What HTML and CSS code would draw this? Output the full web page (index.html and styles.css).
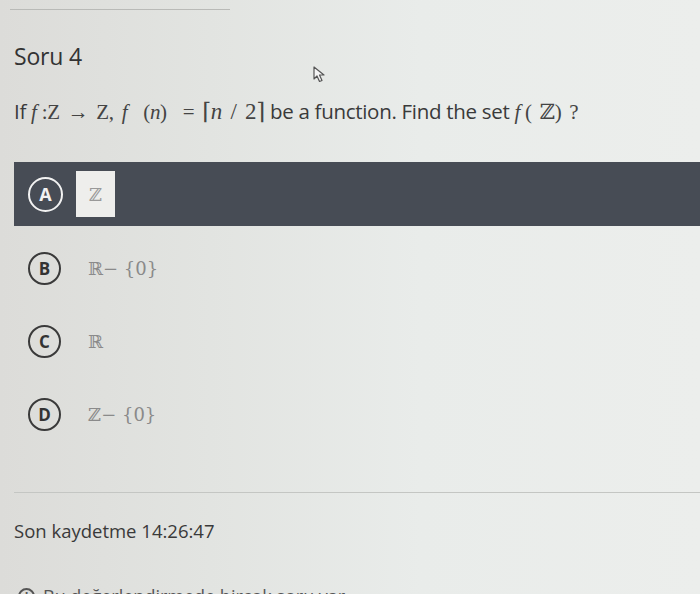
FILE: index.html
```html
<!DOCTYPE html>
<html>
<head>
<meta charset="utf-8">
<link rel="stylesheet" href="styles.css">
</head>
<body>
<div class="page">
  <div class="topline"></div>
  <div class="title-row">
    <h2 class="title">Soru 4</h2>
    <svg class="cursor" width="16" height="18" viewBox="0 0 16 18"><path d="M2 1 L2 13 L5 10 L7.5 15.5 L10 14.5 L7.5 9 L12 9 Z" fill="#f4f4f4" stroke="#555" stroke-width="1.2" stroke-linejoin="round"/></svg>
  </div>
  <p class="question">If <span class="m it">f</span> <span class="m">:Z → Z, <span class="it">f</span>&nbsp; (<span class="it">n</span>)&nbsp; = <span class="ceil">⌈<span class="it">n</span> / 2⌉</span></span> be a function. Find the set <span class="m it">f</span> <span class="m">( ℤ) ?</span></p>
  <div class="options">
    <div class="option selected">
      <span class="letter">A</span>
      <span class="answer box">ℤ</span>
    </div>
    <div class="option">
      <span class="letter">B</span>
      <span class="answer">ℝ− {0}</span>
    </div>
    <div class="option">
      <span class="letter">C</span>
      <span class="answer">ℝ</span>
    </div>
    <div class="option">
      <span class="letter">D</span>
      <span class="answer">ℤ− {0}</span>
    </div>
  </div>
  <div class="divider"></div>
  <p class="saved">Son kaydetme 14:26:47</p>
  <p class="note"><span class="info">!</span> Bu değerlendirmede birçok soru var</p>
</div>
</body>
</html>
```
FILE: styles.css
```css
html, body {
  margin: 0;
  padding: 0;
}
body {
  width: 700px;
  height: 594px;
  overflow: hidden;
  background: linear-gradient(90deg, #dcdcd9 0%, #e2e4e1 30%, #e9ecea 60%, #eceeec 100%);
  font-family: "Open Sans", "Liberation Sans", sans-serif;
  color: #3a3a3a;
}
.page {
  padding: 0 0 0 14px;
}
.topline {
  width: 220px;
  height: 1px;
  background: #b9bab7;
  margin: 9px 0 0 -4px;
}
.title-row {
  display: flex;
  align-items: flex-start;
  height: 56px;
  margin-top: 31px;
}
.title {
  margin: 0;
  font-size: 23px;
  font-weight: 400;
  line-height: 30px;
  color: #333;
  letter-spacing: -0.2px;
}
.cursor {
  margin-left: 230px;
  margin-top: 25px;
}
.question {
  margin: 0;
  font-size: 20.5px;
  line-height: 28px;
  height: 65px;
  letter-spacing: -0.3px;
  white-space: nowrap;
}
.m {
  font-family: "Liberation Serif", "DejaVu Serif", serif;
  font-size: 21px;
  color: #444;
  word-spacing: 3px;
}
.it {
  font-style: italic;
}
.ceil {
  font-size: 23px;
}
.options {
  display: flex;
  flex-direction: column;
}
.option {
  display: flex;
  align-items: center;
  height: 73px;
}
.option.selected {
  background: #474c55;
  height: 64px;
  margin-bottom: 6px;
}
.letter {
  box-sizing: border-box;
  width: 33px;
  height: 33px;
  border: 2.5px solid #3a3a3a;
  border-radius: 50%;
  display: flex;
  align-items: center;
  justify-content: center;
  font-weight: 700;
  font-size: 17px;
  margin-left: 14px;
  color: #333;
}
.selected .letter {
  border-color: #f2f2f2;
  color: #f2f2f2;
  width: 35px;
  height: 35px;
  font-size: 18px;
}
.answer {
  font-family: "DejaVu Serif", "Liberation Serif", serif;
  font-size: 18px;
  color: #8a8a8a;
  margin-left: 27px;
}
.answer.box {
  background: #eeeeec;
  width: 39px;
  height: 46px;
  display: flex;
  align-items: center;
  justify-content: center;
  margin-left: 13px;
  color: #999;
}
.divider {
  height: 1px;
  background: #c4c6c3;
  margin-top: 41px;
}
.saved {
  margin: 25px 0 0 0;
  font-size: 18.5px;
  line-height: 26px;
  color: #3a3a3a;
}
.note {
  margin: 40px 0 0 4px;
  font-size: 18px;
  line-height: 24px;
  display: flex;
  align-items: center;
  gap: 8px;
  color: #555;
}
.info {
  display: inline-flex;
  width: 17px;
  height: 17px;
  border: 2px solid #555;
  border-radius: 50%;
  box-sizing: border-box;
  align-items: center;
  justify-content: center;
  font-size: 11px;
  font-weight: 700;
}
```
